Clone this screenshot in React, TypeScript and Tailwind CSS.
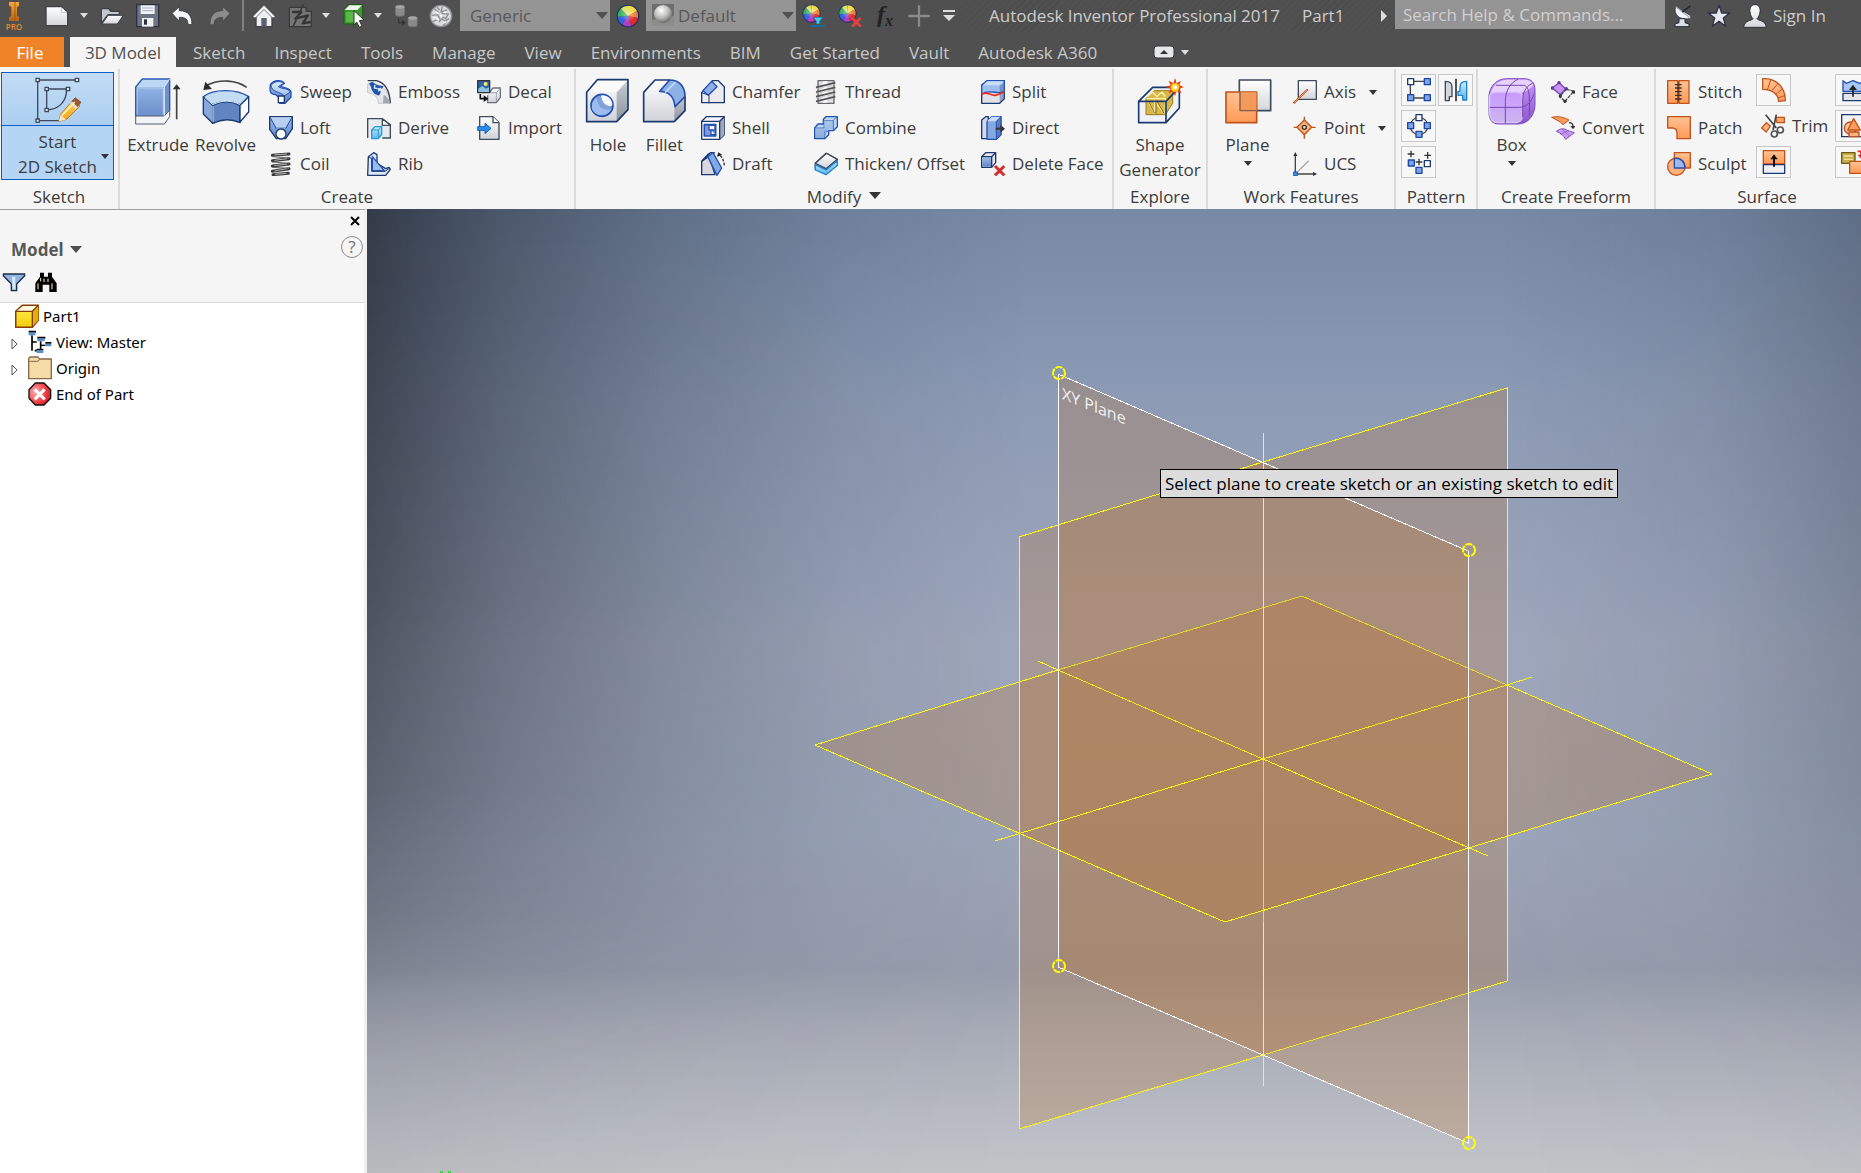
import React from "react";

type Kids = { children?: React.ReactNode };

/* ---------- drawing helpers ---------- */

const navy = "#1c3a72";
const blue = "#2450b4";
const rust = "#c0531c";
const steel = "#3f4a5c";

function Defs() {
  const grads: [string, string, string][] = [
    ["gBlue", "#9dbcea", "#5f86c4"],
    ["gPale", "#dcebfa", "#9fc0e8"],
    ["gGrey", "#ffffff", "#cfd2d8"],
    ["gSide", "#c9ccd4", "#8c919e"],
    ["gOrange", "#ffc294", "#ff9a58"],
    ["gWhite", "#ffffff", "#d4d6da"],
    ["gPurple", "#c79bff", "#cdb4ee"],
    ["gPurpleDk", "#c896f8", "#8a55cc"],
    ["gCyan", "#c4ecff", "#5db4ee"],
    ["gLogo", "#f7a63c", "#b5641a"],
    ["gPencil", "#ffe070", "#f09a10"],
    ["gYellow", "#fff04a", "#f2cc10"],
  ];
  return (
    <svg className="absolute size-0" aria-hidden="true">
      <defs>
        {grads.map(([id, a, b]) => (
          <linearGradient key={id} id={id} x1="0" y1="0" x2="0" y2="1">
            <stop offset="0" stopColor={a} />
            <stop offset="1" stopColor={b} />
          </linearGradient>
        ))}
        <radialGradient id="gBall" cx="0.4" cy="0.3" r="0.7">
          <stop offset="0" stopColor="#ffffff" />
          <stop offset="0.6" stopColor="#b8b8b6" />
          <stop offset="1" stopColor="#6c6c6a" />
        </radialGradient>
        <radialGradient id="gRed" cx="0.3" cy="0.4" r="0.8">
          <stop offset="0" stopColor="#ffb4b4" />
          <stop offset="0.6" stopColor="#f04048" />
          <stop offset="1" stopColor="#d80c18" />
        </radialGradient>
        <radialGradient id="gShine" cx="0.5" cy="0.5" r="0.5">
          <stop offset="0" stopColor="#ffffff" stopOpacity="0.45" />
          <stop offset="1" stopColor="#ffffff" stopOpacity="0" />
        </radialGradient>
      </defs>
    </svg>
  );
}

const Sm = ({ children }: Kids) => (
  <svg viewBox="0 0 72 72" className="size-6 shrink-0" fill="none" strokeWidth="4" strokeLinejoin="round" aria-hidden="true">
    {children}
  </svg>
);
const Lg = ({ children }: Kids) => (
  <svg viewBox="0 0 144 144" className="size-12 shrink-0" fill="none" strokeWidth="4" strokeLinejoin="round" aria-hidden="true">
    {children}
  </svg>
);
const Caret = ({ className = "text-[#333]" }: { className?: string }) => (
  <svg viewBox="0 0 8 5" className={"h-[5px] w-2 shrink-0 " + className} aria-hidden="true">
    <path d="M0 0h8L4 5z" fill="currentColor" />
  </svg>
);
const WideCaret = ({ className = "" }: { className?: string }) => (
  <svg viewBox="0 0 12 7" className={"h-[7px] w-3 shrink-0 " + className} aria-hidden="true">
    <path d="M0 0h12L6 7z" fill="currentColor" />
  </svg>
);

/* ---------- ribbon icons ---------- */

const SketchIcon = () => (
  <Lg>
    <g stroke={steel} strokeWidth="4">
      <path d="M11 12H128M11 12V134H76M38 39H98M38 39V102M98 39C98 76 76 100 38 102" />
      <g fill="#dcecfa" strokeWidth="4">
        <path d="M6 7h10v10H6zM124 7h10v10h-10zM33 34h10v10H33zM97 34h10v10H97zM33 97h10v10H33zM6 129h10v10H6z" />
      </g>
    </g>
    <path d="M74 136l6-22 38-42 20 18-40 40z" fill="url(#gPencil)" stroke="#a05a10" strokeWidth="2" />
    <path d="M112 78l12-13 17 14-12 14z" fill="#a0562c" stroke="#6d3a1c" strokeWidth="2" />
    <path d="M108 82l5-6 18 17-6 6z" fill="#d8dce4" />
    <path d="M74 136l6-20 16 15z" fill="#f8e4c4" />
    <path d="M84 118l38-40" stroke="#fff6b0" strokeWidth="5" />
  </Lg>
);
const ExtrudeIcon = () => (
  <Lg>
    <path d="M5 27L25 3h80l-14 24v108H5z" fill="url(#gBlue)" />
    <path d="M5 27L25 3h82L91 27z" fill="#bcd8f4" />
    <path d="M91 27l16-24v112l-16 20z" fill="#6d8fca" />
    <path d="M5 114h86l16-18v20l-16 22H5z" fill="#f2f3f5" stroke="#555f70" strokeWidth="3" />
    <path d="M9 110V30h79v80" stroke="#b8d0f0" strokeWidth="3" />
    <path d="M5 114V27L25 3h82v94" stroke="#2c58b4" strokeWidth="4" />
    <path d="M91 27v86M91 27l16-24" stroke="#dcebfa" strokeWidth="3" />
    <path d="M128 124V28" stroke="#444" strokeWidth="5" />
    <path d="M116 34l12-15 12 15z" fill="#333" />
  </Lg>
);
const RevolveIcon = () => (
  <Lg>
    <path d="M4 56C34 32 104 32 140 56L116 80C88 68 58 68 30 80z" fill="#c2dcf4" stroke={blue} />
    <path d="M4 56v52l28 28V82z" fill="#86a8dc" stroke={navy} />
    <path d="M32 82C60 68 86 68 114 82v52C88 122 60 122 32 136z" fill="#6284c0" stroke={navy} />
    <path d="M8 58l24 22C60 66 88 66 114 80l22-22M33 84v48" stroke="#dcebfa" strokeWidth="3" />
    <path d="M114 82l26-26v46l-26 30z" fill="#fbfbfd" stroke={navy} strokeWidth="4" />
    <path d="M134 28C104 6 54 2 14 22" stroke="#444" strokeWidth="5" />
    <path d="M4 36l6-25 20 22z" fill="#2c2c2c" />
  </Lg>
);
const SweepIcon = () => (
  <Sm>
    <path d="M4 14C14 -2 40 0 46 10L34 18C44 24 66 24 66 36v16L48 70H32V54L20 44C2 42 2 34 4 14z" fill="url(#gBlue)" stroke={blue} />
    <path d="M6 16C18 2 34 2 44 10L28 20C40 28 58 24 64 36L46 48C34 34 8 38 6 16z" fill="url(#gPale)" stroke={blue} strokeWidth="3" />
    <path d="M28 48h18v20H28z" fill="#fff" stroke={navy} />
  </Sm>
);
const LoftIcon = () => (
  <Sm>
    <path d="M2 2h68v36L50 68H22L2 40z" fill="url(#gBlue)" stroke={navy} />
    <path d="M4 4h64L50 34H22z" fill="#b8d0f0" />
    <path d="M2 2L22 38M70 2L50 38" stroke={blue} strokeWidth="3" />
    <circle cx="36" cy="54" r="15" fill="#fff" stroke={navy} />
  </Sm>
);
const CoilIcon = () => (
  <Sm>
    <g stroke="#3a3a3a" strokeWidth="9" strokeLinecap="round">
      <path d="M10 10L60 6M10 26L60 20M10 42L60 36M10 58L60 50M12 68L58 64" />
    </g>
    <g stroke="#b8b8b8" strokeWidth="3">
      <path d="M16 9L54 6M16 25L54 20M16 41L54 36M16 57L54 50M18 67L52 64" />
    </g>
    <path d="M10 14l50 4M10 30l50 4M10 46l50 3" stroke="#666" strokeWidth="3" />
  </Sm>
);
const EmbossIcon = () => (
  <Sm>
    <path d="M2 12C40 4 66 30 70 70H34C34 52 22 40 2 38z" fill="#e4e6ea" stroke="#b4b8c0" strokeWidth="2" />
    <path d="M2 2h26C54 8 68 30 70 70" stroke="#333c4a" />
    <path d="M50 44c10 6 18 14 20 26H48z" fill="#a4a8b0" />
    <path d="M6 10l10-5 14 10 20 4-6 8-10-4-2 6 10 6-6 12-14-6-8-12-2-8z" fill="#1f55b0" />
    <path d="M24 14l-2 10 10 2M42 24l-8 10" stroke="#d8e8ff" strokeWidth="4" />
  </Sm>
);
const DeriveIcon = () => (
  <Sm>
    <path d="M2 66V8h44l24 18v40H46" fill="#e8eaee" stroke={steel} />
    <path d="M46 8v20h24z" fill="#fff" stroke={steel} />
    <path d="M14 42l10-10h20v24L34 68H14z" fill="url(#gCyan)" stroke="#2a9ad8" />
    <path d="M14 42h20v26M34 42l10-10" stroke="#2a9ad8" strokeWidth="3" />
  </Sm>
);
const RibIcon = () => (
  <Sm>
    <path d="M4 14L20 2l10 6v26l26 16 10-4 4 6-14 18H2z" fill="#dce6f4" stroke={navy} />
    <path d="M16 14l36 42H16z" fill="#9cbcec" stroke={blue} />
    <path d="M4 14l10 6v38h40l14-10" stroke={navy} strokeWidth="3" />
  </Sm>
);
const DecalIcon = () => (
  <Sm>
    <path d="M38 36l10-12h22v28L58 68H32V46" fill="url(#gGrey)" stroke="#6a7080" />
    <path d="M58 38h-18M58 38v28M58 38l12-13" stroke="#9aa0ac" strokeWidth="3" />
    <path d="M2 2h36v36H2z" fill="#2f62a8" stroke="#333" />
    <path d="M4 26l12-8 10 8 10-4v14H4z" fill="#8fc4e0" />
    <circle cx="26" cy="12" r="6" fill="#ffe85a" />
    <path d="M10 42v14h12" stroke="#111" strokeWidth="5" />
    <path d="M20 46l14 10-14 10z" fill="#111" />
  </Sm>
);
const ImportIcon = () => (
  <Sm>
    <path d="M8 2h40l18 18v50H8z" fill="url(#gGrey)" stroke={steel} />
    <path d="M48 2v18h18" fill="#fff" stroke={steel} />
    <path d="M2 32h22V22l18 15-18 16V43H2z" fill="#2d8ce8" stroke="#1464b8" strokeWidth="3" />
  </Sm>
);
const HoleIcon = () => (
  <Lg>
    <path d="M8 43L40 5h92v92l-34 34H8z" fill="url(#gGrey)" />
    <path d="M98 43l34-38v92l-34 34z" fill="url(#gSide)" />
    <path d="M8 43L40 5h92L98 43z" fill="#fbfbfc" />
    <path d="M8 43L40 5h92v90l-34 36H8z" stroke={navy} strokeWidth="5" />
    <circle cx="54" cy="82" r="33" fill="#7fa0d8" stroke={blue} strokeWidth="5" />
    <path d="M52 52c14-3 34 10 33 30-12 8-34-6-33-30z" fill="#f6f8fc" />
    <path d="M24 92c10 26 46 24 58 2-20 4-40-2-44-34-10 8-16 20-14 32z" fill="#9dbcf0" />
  </Lg>
);
const FilletIcon = () => (
  <Lg>
    <path d="M8 43L42 6h40l50 40v54l-34 31H8z" fill="url(#gGrey)" />
    <path d="M100 88l32-34v44l-32 33z" fill="url(#gSide)" />
    <path d="M56 40L86 6c26 0 46 16 46 50L102 86C100 58 84 40 56 40z" fill="#8eb0e4" stroke={blue} strokeWidth="5" />
    <path d="M72 44L104 12" stroke="#c4daf8" strokeWidth="5" />
    <path d="M8 43L42 6h44M8 43v88h92M132 56v42l-32 33" stroke={navy} strokeWidth="5" />
  </Lg>
);
const ChamferIcon = () => (
  <Sm>
    <path d="M2 38L34 2h18l18 18v48H2z" fill="#ececee" stroke={navy} />
    <path d="M2 38l22 8v24" stroke={navy} strokeWidth="3" />
    <path d="M6 32L32 4l16 16-26 26z" fill="#8fb0e4" stroke={blue} />
  </Sm>
);
const ShellIcon = () => (
  <Sm>
    <path d="M2 16L16 2h54v54L56 70H2z" fill="#f6f6f8" stroke={navy} />
    <path d="M56 16L70 2v54L56 70z" fill="#a4a8b4" />
    <path d="M2 16h54v54M56 16L70 2" stroke={navy} />
    <path d="M10 26h34v34H10z" fill="#7c9edc" stroke={blue} strokeWidth="5" />
    <path d="M24 28h18v14H24zM30 42v14h12" fill="#fff" stroke={blue} />
  </Sm>
);
const DraftIcon = () => (
  <Sm>
    <path d="M2 28L22 6l20 62H2z" fill="#d8dade" stroke={navy} />
    <path d="M2 28L28 2h12L22 14z" fill="#fff" stroke={navy} />
    <path d="M20 14L36 2l26 46-14 22z" fill="#84a8e4" stroke={blue} />
    <path d="M70 40C68 24 64 16 56 10" stroke="#333" strokeDasharray="8 4" />
    <path d="M48 14l4-13 12 8z" fill="#222" />
  </Sm>
);
const ThreadIcon = () => (
  <Sm>
    <path d="M12 2h48v68H12z" fill="#e0e0e2" stroke="#6a6a6e" />
    <path d="M26 4h14v64H26z" fill="#fff" />
    <path d="M6 22L64 8M6 36L64 22M6 50L64 36M6 64L64 50" stroke="#555" strokeWidth="5" />
    <path d="M6 27L64 13M6 41L64 27M6 55L64 41" stroke="#bbb" strokeWidth="2" />
  </Sm>
);
const CombineIcon = () => (
  <Sm>
    <path d="M2 36l10-12h16V10l8-8h34v30L58 44H44v12L32 68H2z" fill="#c0d8f4" stroke={blue} />
    <path d="M2 36h28V14h28v28M30 36v-2M58 12L70 2M58 12v30M32 66V46h14" stroke="#4a78c4" strokeWidth="3" />
    <path d="M4 38h26v-24h26v26H44L30 66H4z" fill="url(#gBlue)" opacity="0.55" />
  </Sm>
);
const ThickenIcon = () => (
  <Sm>
    <path d="M4 34L36 4l34 18v16L36 66 4 52z" fill="#8c929c" stroke={steel} />
    <path d="M4 34L38 4l32 18-34 28z" fill="url(#gGrey)" stroke={steel} />
    <path d="M4 38l32 16 34-28v14L36 68 4 54z" fill="url(#gCyan)" stroke="#1f84cc" />
  </Sm>
);
const SplitIcon = () => (
  <Sm>
    <path d="M2 16L18 2h52v54L56 70H2z" fill="#dfe1e6" stroke={navy} />
    <path d="M2 16L18 2h52v32C52 46 28 26 2 42z" fill="#9cbef0" stroke={blue} />
    <path d="M18 4h50L54 16H6z" fill="#c8ddf8" />
    <path d="M56 18v50l14-14V8z" fill="#4a64a0" opacity="0.5" />
    <path d="M2 44c14-14 26 4 40 2s14-6 28-10" stroke="#f02828" strokeWidth="5" />
  </Sm>
);
const DirectIcon = () => (
  <Sm>
    <path d="M2 12L14 2h8v66H2z" fill="#d4dae6" stroke={navy} />
    <path d="M18 16L32 2h28v54L46 70H18z" fill="#84a8e0" stroke={blue} />
    <path d="M18 16L32 2h28L46 16z" fill="#c8dcf6" />
    <path d="M46 16L60 2v54L46 70z" fill="#5a7cbc" stroke={blue} strokeWidth="3" />
    <path d="M44 38h14" stroke="#333" strokeWidth="6" />
    <path d="M58 26l14 12-14 12z" fill="#333" />
  </Sm>
);
const DeleteFaceIcon = () => (
  <Sm>
    <path d="M2 14L14 2h30v30L32 46H2z" fill="#e6e8ee" stroke={navy} />
    <path d="M4 16h26v28H4z" fill="url(#gBlue)" />
    <path d="M2 14h30v32M32 14L44 2" stroke={navy} />
    <path d="M42 42l28 28M70 42L42 70" stroke="#d03030" strokeWidth="9" />
  </Sm>
);
const ShapeGenIcon = () => (
  <Lg>
    <path d="M8 70L50 28h80v62l-40 44H8z" fill="#f0f2f5" />
    <path d="M30 62l24-24h56v38L88 110H30z" fill="#d8b848" stroke="#9a7a18" strokeWidth="3" />
    <path d="M32 62h56v48M36 68l20 38V68l28 38M34 56l16-14 12 14 16-14 10 14" stroke="#fdf0b0" strokeWidth="4" />
    <path d="M38 70l18 36M62 68l22 38M60 68v40" stroke="#8a6a10" strokeWidth="3" />
    <path d="M8 70L50 28h80v62l-40 44H8zM8 70h82v64M90 70l40-42" stroke={navy} strokeWidth="5" />
    <path d="M117 0l5 16 12-7-4 13 15 5-15 5 6 14-14-7-5 15-6-15-13 8 6-15-15-5 15-5-6-14 14 8z" fill="#e8380c" />
    <circle cx="117" cy="28" r="13" fill="#ffd21c" />
    <circle cx="117" cy="28" r="6" fill="#fff" />
  </Lg>
);
const PlaneIcon = () => (
  <Lg>
    <path d="M46 6h94v92H46z" fill="url(#gWhite)" stroke={steel} strokeWidth="5" />
    <path d="M6 42h92v92H6z" fill="url(#gOrange)" stroke={rust} strokeWidth="5" />
    <path d="M48 42h50v56H48z" fill="#f09455" opacity="0.8" />
    <path d="M48 42v56h50" stroke="#8a5a44" strokeWidth="4" />
  </Lg>
);
const AxisIcon = () => (
  <Sm>
    <path d="M16 2h54v56H16z" fill="url(#gWhite)" stroke={steel} />
    <path d="M2 70L44 28" stroke={rust} strokeWidth="6" />
    <path d="M4 68L42 30" stroke="#ffb080" strokeWidth="2" />
  </Sm>
);
const PointIcon = () => (
  <Sm>
    <path d="M34 2v66M2 34h66" stroke={rust} />
    <path d="M34 12l22 22-22 22-22-22z" fill="#ffb27c" stroke={rust} />
    <circle cx="34" cy="34" r="6" fill="#ffd8b8" stroke="#333" strokeWidth="4" />
  </Sm>
);
const UcsIcon = () => (
  <Sm>
    <path d="M7 66V6M7 66h60" stroke="#444" />
    <path d="M7 66l40-40" stroke="#aaa" />
    <path d="M1 12L7 0l6 12zM60 60l12 6-12 6z" fill="#333" />
    <path d="M2 60h11v11H2z" fill="#3a8cf0" stroke="#1858b0" strokeWidth="3" />
  </Sm>
);
const RectPatternIcon = () => (
  <Sm>
    <path d="M10 10h50M10 10v50h50" stroke="#444" />
    <path d="M2 2h18v18H2z" fill="#fff" stroke={navy} />
    <path d="M52 2h18v18H52zM2 50h18v18H2zM52 50h18v18H52z" fill="#7fa4e4" stroke="#1c48a8" />
  </Sm>
);
const MirrorIcon = () => (
  <Sm>
    <path d="M4 10c12 0 20 6 20 16v30h-8v12H4z" fill="#d4d6da" stroke={steel} />
    <path d="M68 10c-12 0-20 6-20 16v14h-6v12h14v14h12z" fill="url(#gCyan)" stroke="#1f84cc" />
    <path d="M36 2v68" stroke="#333" strokeWidth="5" />
  </Sm>
);
const CircPatternIcon = () => (
  <Sm>
    <circle cx="36" cy="36" r="26" stroke="#444" />
    <path d="M27 2h18v18H27z" fill="#fff" stroke={navy} />
    <path d="M2 26h18v18H2zM52 26h18v18H52zM27 52h18v18H27z" fill="#7fa4e4" stroke="#1c48a8" />
  </Sm>
);
const SketchPatternIcon = () => (
  <Sm>
    <path d="M12 2v20M2 12h20M36 26v20M26 36h20M62 6v20M52 16h20" stroke="#333" />
    <path d="M4 30h18v18H4zM27 52h18v18H27z" fill="#7fa4e4" stroke="#1c48a8" />
    <path d="M52 32h18v18H52z" fill="#fff" stroke={navy} />
  </Sm>
);
const BoxIcon = () => (
  <Lg>
    <path d="M3 52C5 24 28 2 56 2h52c22 0 33 12 33 34v44c0 32-22 58-50 58H32C14 138 3 126 3 104z" fill="url(#gPurpleDk)" stroke="#7a4fc0" strokeWidth="3" />
    <path d="M8 46C14 20 36 5 58 5h50c14 0 24 6 28 16-12 14-22 20-38 24z" fill="#e6d2fa" />
    <path d="M5 58c0-10 8-16 20-16h60c12 0 18 6 18 16v56c0 12-8 20-20 20H30c-14 0-25-10-25-28z" fill="url(#gPurple)" stroke="#dcc6fa" strokeWidth="4" />
    <path d="M52 136V70C52 40 66 14 90 4M5 88h90c26 0 38-24 44-42M104 118V62C106 34 120 22 134 16M24 22h84c14 4 18 20 16 90" stroke="#7546b4" strokeWidth="3" />
  </Lg>
);
const FaceIcon = () => (
  <Sm>
    <path d="M4 24L24 8l20 18-16 18z" fill="#c894f4" stroke="#7a44b8" />
    <path d="M46 28l22 6-26 30-16-14z" fill="#f2f2f4" stroke="#444" strokeDasharray="10 3" />
    <g fill="#5c3494">
      <circle cx="24" cy="8" r="5" />
      <circle cx="4" cy="24" r="5" />
      <circle cx="46" cy="26" r="5" />
    </g>
    <g fill="#333">
      <circle cx="68" cy="36" r="5" />
      <circle cx="42" cy="64" r="5" />
      <circle cx="28" cy="48" r="5" />
    </g>
  </Sm>
);
const ConvertIcon = () => (
  <Sm>
    <path d="M2 4c16-4 34-2 52 8L36 26C28 16 16 12 2 4z" fill="#f79a5c" stroke={rust} strokeWidth="3" />
    <path d="M16 46c14-10 24-10 34-2l20 6-26 20C38 58 30 52 16 46z" fill="#c79cf0" stroke="#8450c0" strokeWidth="3" />
    <path d="M34 40l22 20M28 56l26-14" stroke="#8450c0" strokeWidth="2" />
    <path d="M54 20c8 0 12 4 12 12" stroke="#333" />
    <path d="M58 30h16l-8 10z" fill="#333" />
  </Sm>
);
const StitchIcon = () => (
  <Sm>
    <path d="M2 2h30v68H2zM36 2h30v68H36z" fill="url(#gOrange)" stroke={rust} />
    <path d="M34 8v56" stroke="#8a3a10" strokeWidth="3" />
    <path d="M24 14h20M24 24h20M24 35h20M24 46h20M24 57h20" stroke="#333" />
  </Sm>
);
const PatchIcon = () => (
  <Sm>
    <path d="M2 2h68v66H30V52C30 40 26 36 16 36H2z" fill="url(#gOrange)" stroke={rust} />
  </Sm>
);
const SculptIcon = () => (
  <Sm>
    <path d="M22 2h48v46H22z" fill="url(#gOrange)" stroke={rust} />
    <circle cx="28" cy="44" r="26" fill="#ffb27c" stroke={rust} />
    <path d="M22 20c18-4 32 10 32 28H22z" fill="#9cb8e8" stroke={blue} />
  </Sm>
);
const RuledIcon = () => (
  <Sm>
    <path d="M2 2c42-2 68 26 68 66l-20 2C48 48 30 34 2 34z" fill="url(#gOrange)" stroke={rust} />
    <path d="M16 36L26 6M28 40L48 16M40 50l22-18M48 60l22-8" stroke={rust} strokeWidth="3" />
  </Sm>
);
const TrimIcon = () => (
  <Sm>
    <path d="M2 42l14-16 12 10-12 18z" fill="#ffb27c" stroke={rust} />
    <path d="M44 10h26v16H48z" fill="#ffa868" stroke={rust} />
    <path d="M14 2l32 40M46 2L36 48" stroke="#444" strokeWidth="5" />
    <circle cx="58" cy="48" r="9" stroke="#555" strokeWidth="5" />
    <circle cx="40" cy="60" r="9" stroke="#555" strokeWidth="5" />
  </Sm>
);
const ExtendIcon = () => (
  <Sm>
    <path d="M4 2h64v40H4z" fill="url(#gOrange)" stroke={rust} />
    <path d="M4 44h64v26H4z" fill="#eef0f3" stroke={navy} />
    <path d="M36 50V20" stroke="#111" strokeWidth="6" />
    <path d="M25 28l11-15 11 15z" fill="#111" />
  </Sm>
);
const ReplaceIcon = () => (
  <Sm>
    <path d="M6 8l10 8 20-8 20 8 16-8v32H6z" fill="#a8c6f2" stroke={blue} />
    <path d="M6 46h66v22H6z" fill="#e4e6ea" stroke={navy} />
    <path d="M36 56V28" stroke="#222" strokeWidth="5" />
    <path d="M24 36l12-16 12 16z" fill="#222" />
  </Sm>
);
const RepairIcon = () => (
  <Sm>
    <path d="M2 2h68v66H2z" fill="#f2f2f4" stroke={navy} />
    <circle cx="28" cy="42" r="18" fill="#ffc49a" stroke={rust} />
    <path d="M38 14l20 34H20z" fill="#ff9c5c" stroke={rust} />
    <path d="M24 54h30v14H24z" fill="#ffb27c" stroke={rust} />
  </Sm>
);
const FitMeshIcon = () => (
  <Sm>
    <path d="M2 8h40v32H2z" fill="#c8b050" stroke="#6a5a14" />
    <path d="M8 18h28M8 28h28" stroke="#f0e090" />
    <path d="M26 34h46v36H26z" fill="url(#gOrange)" stroke={rust} />
    <path d="M50 4h10v14" stroke="#f02020" strokeWidth="5" />
    <path d="M50 14h20l-10 12z" fill="#f02020" />
  </Sm>
);

/* ---------- ribbon building blocks ---------- */

function Panel({ title, width, caret, children }: { title: string; width: string; caret?: boolean } & Kids) {
  return (
    <section className={"flex h-[142px] shrink-0 flex-col pt-[7px] " + width}>
      <div className="flex h-[108px] items-start">{children}</div>
      <h2 className="flex h-[27px] items-end justify-center gap-2 leading-6">
        <span>{title}</span>
        {caret && <WideCaret className="mb-2.5 text-[#333]" />}
      </h2>
    </section>
  );
}
const Rule = () => <div className="mt-0.5 w-0.5 shrink-0 bg-[#dadada]" />;

function Big({ icon, lines, width, caret }: { icon: React.ReactNode; lines: string[]; width: string; caret?: boolean }) {
  return (
    <button type="button" className={"flex shrink-0 flex-col items-center pt-1 " + width}>
      {icon}
      <span className="mt-1.5 flex flex-col items-center leading-[25px] whitespace-nowrap">
        {lines.map((l) => (
          <span key={l}>{l}</span>
        ))}
      </span>
      {caret && <Caret className="mt-1 text-[#333]" />}
    </button>
  );
}
type Item = [React.ReactNode, string, boolean?];
function Column({ items, width }: { items: Item[]; width: string }) {
  return (
    <div className={"flex shrink-0 flex-col " + width}>
      {items.map(([icon, label, caret]) => (
        <button key={label} type="button" className="flex h-9 items-center gap-[7px] whitespace-nowrap">
          {icon}
          <span>{label}</span>
          {caret && <Caret className="ml-1.5 text-[#333]" />}
        </button>
      ))}
    </div>
  );
}
function Boxed({ label, children }: { label: string } & Kids) {
  return (
    <button type="button" aria-label={label} className="flex h-8 w-[35px] shrink-0 items-center justify-center border border-[#c8c8c8] bg-[#f7f7f7]">
      {children}
    </button>
  );
}

function Ribbon() {
  return (
    <div className="flex shrink-0 overflow-hidden bg-[#f5f5f5] text-[#3c3c3c]">
      <Panel title="Sketch" width="w-[118px]">
        <button type="button" className="mt-[-2px] ml-px flex h-[108px] w-[113px] flex-col items-center border border-[#0b5fc4] bg-[#b4d5f3]">
          <span className="flex h-[55px] w-full items-center justify-center border-b border-[#0b5fc4] bg-gradient-to-b from-[#c3dcf5] to-[#abcff0] pt-0.5">
            <SketchIcon />
          </span>
          <span className="relative mt-[3px] block w-full leading-[25px]">
            Start
            <br />
            2D Sketch
            <span className="absolute right-1 bottom-5">
              <Caret />
            </span>
          </span>
        </button>
      </Panel>
      <Rule />
      <Panel title="Create" width="w-[454px]">
        <Big icon={<ExtrudeIcon />} lines={["Extrude"]} width="ml-1.5 w-16" />
        <Big icon={<RevolveIcon />} lines={["Revolve"]} width="ml-1 mr-3 w-[63px]" />
        <Column width="w-[98px]" items={[[<SweepIcon />, "Sweep"], [<LoftIcon />, "Loft"], [<CoilIcon />, "Coil"]]} />
        <Column width="w-[110px]" items={[[<EmbossIcon />, "Emboss"], [<DeriveIcon />, "Derive"], [<RibIcon />, "Rib"]]} />
        <Column width="w-[90px]" items={[[<DecalIcon />, "Decal"], [<ImportIcon />, "Import"]]} />
      </Panel>
      <Rule />
      <Panel title="Modify" width="w-[536px]" caret>
        <Big icon={<HoleIcon />} lines={["Hole"]} width="ml-1 w-14" />
        <Big icon={<FilletIcon />} lines={["Fillet"]} width="mr-2 w-[57px]" />
        <Column width="w-[113px]" items={[[<ChamferIcon />, "Chamfer"], [<ShellIcon />, "Shell"], [<DraftIcon />, "Draft"]]} />
        <Column width="w-[167px]" items={[[<ThreadIcon />, "Thread"], [<CombineIcon />, "Combine"], [<ThickenIcon />, "Thicken/ Offset"]]} />
        <Column width="w-[124px]" items={[[<SplitIcon />, "Split"], [<DirectIcon />, "Direct"], [<DeleteFaceIcon />, "Delete Face"]]} />
      </Panel>
      <Rule />
      <Panel title="Explore" width="w-[92px]">
        <Big icon={<ShapeGenIcon />} lines={["Shape", "Generator"]} width="w-full" />
      </Panel>
      <Rule />
      <Panel title="Work Features" width="w-[186px]">
        <Big icon={<PlaneIcon />} lines={["Plane"]} width="ml-[9px] mr-[15px] w-[61px]" caret />
        <Column width="w-[98px]" items={[[<AxisIcon />, "Axis", true], [<PointIcon />, "Point", true], [<UcsIcon />, "UCS"]]} />
      </Panel>
      <Rule />
      <Panel title="Pattern" width="w-20">
        <div className="ml-[5px] grid grid-cols-2 gap-x-0.5 gap-y-1">
          <Boxed label="Rectangular Pattern"><RectPatternIcon /></Boxed>
          <Boxed label="Mirror"><MirrorIcon /></Boxed>
          <Boxed label="Circular Pattern"><CircPatternIcon /></Boxed>
          <span />
          <Boxed label="Sketch Driven Pattern"><SketchPatternIcon /></Boxed>
        </div>
      </Panel>
      <Rule />
      <Panel title="Create Freeform" width="w-44">
        <Big icon={<BoxIcon />} lines={["Box"]} width="ml-[7px] mr-[13px] w-[53px]" caret />
        <Column width="w-[100px]" items={[[<FaceIcon />, "Face"], [<ConvertIcon />, "Convert"]]} />
      </Panel>
      <Rule />
      <Panel title="Surface" width="w-[222px]">
        <Column width="ml-[11px] w-[89px]" items={[[<StitchIcon />, "Stitch"], [<PatchIcon />, "Patch"], [<SculptIcon />, "Sculpt"]]} />
        <div className="flex w-[79px] shrink-0 flex-col gap-1">
          <Boxed label="Ruled Surface"><RuledIcon /></Boxed>
          <button type="button" className="flex h-8 items-center gap-[7px] pl-[5px]">
            <TrimIcon />
            <span>Trim</span>
          </button>
          <Boxed label="Extend"><ExtendIcon /></Boxed>
        </div>
        <div className="flex shrink-0 flex-col gap-1">
          <Boxed label="Replace Face"><ReplaceIcon /></Boxed>
          <Boxed label="Repair Bodies"><RepairIcon /></Boxed>
          <Boxed label="Fit Mesh Face"><FitMeshIcon /></Boxed>
        </div>
      </Panel>
    </div>
  );
}

/* ---------- quick access bar ---------- */

const Wheel = () => (
  <g>
    <circle cx="36" cy="36" r="34" fill="#1b2c66" />
    <path d="M36 36L36 5A31 31 0 0 1 63 21z" fill="#f4d83c" />
    <path d="M36 36L63 21A31 31 0 0 1 66 42z" fill="#f08030" />
    <path d="M36 36L66 42A31 31 0 0 1 46 65z" fill="#e02c2c" />
    <path d="M36 36L46 65A31 31 0 0 1 18 61z" fill="#b040c8" />
    <path d="M36 36L18 61A31 31 0 0 1 5 38z" fill="#3464e0" />
    <path d="M36 36L5 38A31 31 0 0 1 14 14z" fill="#38b060" />
    <path d="M36 36L14 14A31 31 0 0 1 36 5z" fill="#d4e05c" />
    <circle cx="36" cy="30" r="24" fill="url(#gShine)" />
  </g>
);

function IconButton({ label, width, children }: { label: string; width: string } & Kids) {
  return (
    <button type="button" aria-label={label} className={"flex h-[31px] shrink-0 items-center justify-center " + width}>
      {children}
    </button>
  );
}

function TitleBar() {
  return (
    <div className="flex h-[31px] shrink-0 items-start whitespace-nowrap">
      <IconButton label="Application menu" width="w-7">
        <svg viewBox="0 0 28 31" className="h-[31px] w-7" aria-hidden="true">
          <path d="M9 2h10v4l-2 1v9l2 1v4H9v-4l2-1V7L9 6z" fill="url(#gLogo)" />
          <path d="M9 6l2 1v9l-2 1M15 2v19" stroke="#8a4a10" strokeOpacity="0.7" fill="none" />
          <text x="14" y="30" textAnchor="middle" fontSize="8" fontWeight="600" fill="#e08a2c" fontFamily="Open Sans, sans-serif">PRO</text>
        </svg>
      </IconButton>
      <IconButton label="New" width="ml-3.5 w-[30px]">
        <Sm><path d="M3 8h46l19 17v40H3z" fill="url(#gWhite)" stroke="#3c4048" /><path d="M49 10v15h17" fill="#fff" stroke="#9aa" strokeWidth="2" /></Sm>
      </IconButton>
      <IconButton label="New file options" width="w-6"><Caret className="text-[#ddd]" /></IconButton>
      <IconButton label="Open" width="w-8">
        <Sm><path d="M4 58V14h22l6 8h26v10H24z" fill="#c4c8ce" stroke="#3c4048" /><path d="M6 60l18-26h46L52 60z" fill="url(#gWhite)" stroke="#3c4048" strokeWidth="3" /></Sm>
      </IconButton>
      <IconButton label="Save" width="ml-1 w-8">
        <Sm><path d="M2 2h66v66H2z" fill="#6c7484" stroke="#2c3240" /><path d="M14 4h42v26H14z" fill="#f4f5f8" /><path d="M18 12h34M18 20h34" stroke="#aab" strokeWidth="3" /><path d="M18 42h34v26H18z" fill="#f0f0f2" /><path d="M24 46h9v16h-9z" fill="#2c3240" /></Sm>
      </IconButton>
      <IconButton label="Undo" width="ml-0.5 w-8">
        <Sm><path d="M6 28L28 8v12c26 0 38 14 38 42h-12c0-16-8-22-26-22v12z" fill="#f4f6f8" stroke="#3c4048" strokeWidth="3" /></Sm>
      </IconButton>
      <IconButton label="Redo" width="ml-1.5 w-8">
        <Sm><path d="M66 28L44 8v12C18 20 6 34 6 62h12c0-16 8-22 26-22v12z" fill="#8c8c8c" stroke="#444" strokeWidth="2" /></Sm>
      </IconButton>
      <div className="ml-1.5 h-[31px] w-0.5 shrink-0 bg-[#808080]" />
      <IconButton label="Home" width="ml-1 w-8">
        <Sm><path d="M12 36v32h48V36L36 12z" fill="#eceef2" stroke="#3c4048" /><path d="M2 38L36 4l34 34-8 4-26-26L10 42z" fill="#fff" stroke="#3c4048" strokeWidth="2" /><path d="M28 42h16v26H28z" fill="#5a6070" /></Sm>
      </IconButton>
      <IconButton label="Return" width="ml-1 w-8">
        <Sm><path d="M4 10h50v12h16v46H4z" fill="#757575" stroke="#3a3a3a" /><path d="M12 24h28L22 44l38-10-16 24 24-4" stroke="#343434" strokeWidth="7" /><path d="M14 70L46 2" stroke="#3a3a3a" strokeWidth="5" /></Sm>
      </IconButton>
      <IconButton label="Return options" width="w-5"><Caret className="text-[#ddd]" /></IconButton>
      <IconButton label="Select" width="ml-0.5 w-8">
        <Sm><path d="M6 16L20 2h42v40L48 60H6z" fill="#3c9a2c" stroke="#1c5a14" strokeWidth="3" /><path d="M8 18L22 4h38L46 18z" fill="#ecf6ea" /><path d="M12 24h32v30H12z" fill="#58b848" /><path d="M36 20l30 28-14 2 8 16-8 4-8-16-8 10z" fill="#fff" stroke="#333" strokeWidth="3" /></Sm>
      </IconButton>
      <IconButton label="Select options" width="w-4"><Caret className="text-[#ddd]" /></IconButton>
      <IconButton label="Update" width="ml-1 w-8">
        <Sm><g fill="#8a8a8a" stroke="#6c6c6c" strokeWidth="2"><path d="M4 8c0-6 28-6 28 0v24c0 6-28 6-28 0zM42 42c0-6 28-6 28 0v22c0 6-28 6-28 0z" /></g><g fill="#a6a6a6"><ellipse cx="18" cy="9" rx="13" ry="5" /><ellipse cx="56" cy="42" rx="13" ry="5" /></g><path d="M14 44v12h12" stroke="#333" /><path d="M24 48l12 8-12 8z" fill="#333" /></Sm>
      </IconButton>
      <IconButton label="Material browser" width="ml-[3px] w-8">
        <Sm><circle cx="36" cy="36" r="32" fill="#d8dadd" stroke="#8c9096" /><path d="M16 14l14 12M40 8l-4 16 18-6M8 34l18-2 6 12-20 8M38 28l20 2-8 14-14-8M30 54l8-10 14 10-10 12M60 44l-10 6M24 10l8 8" stroke="#8a8e94" strokeWidth="4" /><path d="M20 24l8 4M44 24l8 2M22 44l8 2M44 56l8-2M34 34l6 4M14 40l6 2" stroke="#fff" strokeWidth="5" /></Sm>
      </IconButton>
      <label className="relative ml-[3px] w-[150px] shrink-0">
        <select aria-label="Material" className="h-[31px] w-full appearance-none bg-[#949494] pr-6 pl-2.5 text-[#585858]">
          <option>Generic</option>
        </select>
        <WideCaret className="pointer-events-none absolute top-3 right-0.5 text-[#505050]" />
      </label>
      <IconButton label="Appearance browser" width="w-9"><Sm><Wheel /></Sm></IconButton>
      <label className="relative w-[150px] shrink-0">
        <select aria-label="Appearance" className="h-[31px] w-full appearance-none bg-[#949494] pr-6 pl-8 text-[#585858]">
          <option>Default</option>
        </select>
        <svg viewBox="0 0 22 22" className="pointer-events-none absolute top-1 left-1.5 size-[22px]" aria-hidden="true">
          <path d="M0 0h22v22H0z" fill="#6e6e6c" />
          <path d="M0 16l22-4v10H0z" fill="#8c8c88" />
          <circle cx="11" cy="10" r="9" fill="url(#gBall)" />
        </svg>
        <WideCaret className="pointer-events-none absolute top-3 right-0.5 text-[#505050]" />
      </label>
      <IconButton label="Adjust appearance" width="w-9">
        <Sm><g transform="scale(0.8)"><Wheel /></g><path d="M34 40h28l-9 12v8h-10v-8z" fill="#40c8f8" stroke="#1470a0" strokeWidth="2" /><path d="M26 66h44" stroke="#1c6ca0" strokeWidth="5" /></Sm>
      </IconButton>
      <IconButton label="Clear appearance" width="w-9">
        <Sm><g transform="scale(0.8)"><Wheel /></g><path d="M42 42l26 26M68 42L42 68" stroke="#e8403c" strokeWidth="8" /></Sm>
      </IconButton>
      <IconButton label="Parameters" width="w-[34px]">
        <span className="font-['Liberation_Serif',serif] text-2xl leading-6 font-bold text-[#222] italic">f<sub className="text-base">x</sub></span>
      </IconButton>
      <IconButton label="Add" width="w-[34px]">
        <Sm><path d="M36 4v64M4 36h64" stroke="#8a8a8a" strokeWidth="7" /></Sm>
      </IconButton>
      <IconButton label="Customize" width="ml-px w-6">
        <svg viewBox="0 0 12 11" className="h-[11px] w-3" aria-hidden="true"><path d="M0 0h12v2H0zM0 5h12l-6 6z" fill="#ddd" /></svg>
      </IconButton>
      <div className="flex h-[31px] min-w-0 flex-1 items-center bg-[repeating-linear-gradient(135deg,#4b4b4b_0px,#4b4b4b_1px,#505050_1px,#505050_5px)] pl-7 text-[#ccc]">
        <h1>Autodesk Inventor Professional 2017</h1>
        <span className="ml-[22px]">Part1</span>
        <svg viewBox="0 0 6 12" className="mr-2 ml-auto h-3 w-1.5" aria-hidden="true"><path d="M0 0l6 6-6 6z" fill="#ddd" /></svg>
      </div>
      <input type="search" aria-label="Search Help & Commands" placeholder="Search Help & Commands..." className="h-[29px] w-[270px] shrink-0 bg-[#949494] px-2 placeholder:text-[#d0d0d0]" />
      <IconButton label="Communication center" width="w-9">
        <Sm><path d="M14 8C8 30 22 48 54 44L60 36z" fill="#f4f5f8" stroke="#2c3240" strokeWidth="2" /><path d="M14 8l44 34" stroke="#aab0bc" strokeWidth="4" /><path d="M34 24L58 6" stroke="#222a34" strokeWidth="5" /><path d="M24 44h18v12l12 4v8H12v-8l12-4z" fill="#dcdfe4" stroke="#222a34" strokeWidth="3" /></Sm>
      </IconButton>
      <IconButton label="Favorites" width="w-[35px]">
        <Sm><path d="M36 4l8 23h24L49 42l7 25-20-15-20 15 7-25L4 27h24z" fill="#e4e6f0" stroke="#2c3240" strokeWidth="4" /></Sm>
      </IconButton>
      <button type="button" className="flex h-[31px] w-[125px] shrink-0 items-center gap-1.5 pl-[7px] text-[#ccc]">
        <Sm><path d="M36 2c12 0 17 10 15 22-1 10-5 16-9 20 2 6 26 4 28 26H2c2-22 26-20 28-26-4-4-8-10-9-20C19 12 24 2 36 2z" fill="url(#gWhite)" stroke="#2c3240" strokeWidth="3" /></Sm>
        Sign In
      </button>
    </div>
  );
}

const tabs = ["Sketch", "Inspect", "Tools", "Manage", "View", "Environments", "BIM", "Get Started", "Vault", "Autodesk A360"];

function TabBar() {
  return (
    <nav className="mt-1.5 flex h-[30px] shrink-0 items-stretch whitespace-nowrap text-[#c8c8c8]">
      <button type="button" className="mr-1.5 w-16 bg-[#f08228] pt-0.5 pr-1 text-white">File</button>
      <button type="button" aria-current="page" className="w-[106px] bg-[#f5f5f5] pt-0.5 text-[#505050]">3D Model</button>
      <div className="flex">
        {tabs.map((t) => (
          <button key={t} type="button" className="pt-0.5 pr-[15px] pl-3.5 first:pl-[17px]">{t}</button>
        ))}
      </div>
      <button type="button" aria-label="Minimize ribbon" className="ml-10 flex items-center gap-1.5 pl-px">
        <svg viewBox="0 0 22 14" className="h-3.5 w-[22px]" aria-hidden="true">
          <rect x="1" y="1" width="20" height="12" rx="3" fill="#e4e6ea" stroke="#30343c" />
          <path d="M7 9h8l-4-4z" fill="#333" />
        </svg>
        <Caret className="text-[#ddd]" />
      </button>
    </nav>
  );
}

/* ---------- model browser ---------- */

const Expander = () => (
  <svg viewBox="0 0 8 12" className="mt-1 h-3 w-2 shrink-0" aria-hidden="true">
    <path d="M1 1l5 5-5 5z" fill="#fff" stroke="#555" />
  </svg>
);

function Browser() {
  return (
    <aside className="flex w-[367px] shrink-0 flex-col border-t border-r-[3px] border-t-[#a0a0a0] border-r-[#f0f0f0] bg-white font-['Noto_Sans',sans-serif] text-[15px] text-black">
      <div className="h-[93px] border-b border-[#d8d8d8] bg-[#f5f5f5]">
        <div className="flex h-[21px] items-center justify-end pr-1">
          <button type="button" aria-label="Close">
            <svg viewBox="0 0 10 10" className="size-2.5" aria-hidden="true"><path d="M1 1l8 8M9 1L1 9" stroke="#000" strokeWidth="2" /></svg>
          </button>
        </div>
        <div className="flex h-[37px] items-center pr-px pl-[11px]">
          <button type="button" className="flex items-center gap-1.5 text-[17px] font-bold text-[#585858]">
            Model
            <WideCaret className="text-[#505050]" />
          </button>
          <button type="button" aria-label="Help" className="mb-1.5 ml-auto flex size-[22px] items-center justify-center rounded-full border border-[#8c8c8c] text-[17px] text-[#777]">?</button>
        </div>
        <div className="flex h-7 items-center gap-2 pl-0.5">
          <button type="button" aria-label="Filter">
            <Sm><path d="M4 12h64v5L44 42v20H28V42L4 17z" fill="#8fb4e0" stroke="#1c2c48" /><path d="M30 20h10v38h-8z" fill="#d8e8f8" /></Sm>
          </button>
          <button type="button" aria-label="Find">
            <Sm><path d="M18 8h12v12h12V8h12v12l14 20v26H46V44H26v22H4V40l14-20z" fill="#000" /><path d="M12 40v18M20 24v10M30 26v10M54 40v18M42 26v10" stroke="#fff8c0" strokeWidth="3" /></Sm>
          </button>
        </div>
      </div>
      <ul className="leading-[26px]">
        <li className="flex h-[26px] items-center gap-1 pl-[15px]">
          <Sm><path d="M2 22L22 4h48v44L52 70H2z" fill="url(#gYellow)" stroke="#8a3c08" strokeWidth="5" /><path d="M4 22L24 6h44L52 22z" fill="#fffbe0" /><path d="M52 22L70 6v42L52 68z" fill="#e0b010" /><path d="M2 22h50v48M52 22L70 4" stroke="#8a3c08" /></Sm>
          Part1
        </li>
        <li className="flex h-[26px] items-center pl-[11px]">
          <Expander />
          <span className="mr-1 ml-[9px] flex"><Sm><path d="M12 16v46M12 36h14M28 62h-8M38 34v22" stroke="#000" strokeWidth="5" /><path d="M38 46h14" stroke="#000" strokeWidth="4" /><path d="M2 2h22v6H2zM28 20h24v6H28zM26 56h20v5H26zM52 36h18v5H52z" fill="#000" /><path d="M2 7h20v9H2zM28 25h22v9H28zM52 41h18v8H52zM26 60h20v9H26z" fill="#5a8cc8" /></Sm></span>
          View: Master
        </li>
        <li className="flex h-[26px] items-center pl-[11px]">
          <Expander />
          <span className="mr-1 ml-[9px] flex"><Sm><path d="M2 8l4-5h24l4 6h36v59H2z" fill="#f5dba8" stroke="#86694a" /><path d="M4 16h26l5-6" stroke="#86694a" strokeWidth="3" /></Sm></span>
          Origin
        </li>
        <li className="flex h-[26px] items-center gap-1 pl-7">
          <Sm><path d="M22 3h26l20 20v26L48 69H22L3 49V23z" fill="url(#gRed)" stroke="#111" strokeWidth="4" /><path d="M20 22l30 30M50 22L20 52" stroke="#fff" strokeWidth="9" /></Sm>
          End of Part
        </li>
      </ul>
    </aside>
  );
}

/* ---------- 3D viewport ---------- */

const fill = { fill: "#ba6e26", fillOpacity: 0.25 };
const handles = [[1059, 373], [1469, 550], [1059, 966], [1469, 1143]];

function Viewport() {
  return (
    <main className="relative min-w-0 flex-1 overflow-hidden bg-[linear-gradient(180deg,#7789a5_0%,#8d9bb5_20%,#9fa7bc_45%,#9ca5b9_65%,#979dad_79%,#a7abb6_85%,#b0b4bd_90%,#babdc5_95%,#c3c4c7_100%)]">
      <div className="absolute inset-0 bg-[linear-gradient(90deg,rgba(28,32,40,0.74)_0%,rgba(32,38,48,0.5)_9%,rgba(40,50,62,0.29)_20%,rgba(50,60,75,0.11)_32%,rgba(50,60,80,0)_44%,rgba(50,60,80,0)_76%,rgba(50,60,75,0.12)_90%,rgba(45,55,70,0.33)_100%)] [mask-image:linear-gradient(180deg,#000_0%,rgba(0,0,0,0.85)_40%,rgba(0,0,0,0.68)_60%,rgba(0,0,0,0.45)_73%,rgba(0,0,0,0.22)_81%,rgba(0,0,0,0.13)_88%,rgba(0,0,0,0.08)_100%)]" />
      <svg viewBox="367 209 1494 964" preserveAspectRatio="xMidYMin slice" className="absolute inset-0 h-full w-full" fill="none" role="img" aria-label="Origin planes">
        <polygon points="1019,537 1507,388 1507,981 1019,1129" {...fill} />
        <polygon points="815,745 1302,596 1712,774 1225,922" {...fill} />
        <polygon points="1058,374 1468,551 1468,1143 1058,967" {...fill} />
        <g stroke="#ffff00" shapeRendering="crispEdges">
          <polyline points="1263,462 1507,388 1507,981 1468,993" />
          <polyline points="1263,462 1019,537 1019,1129 1263,1055" />
          <path d="M1468 993L1263 1055" strokeOpacity="0.75" />
          <polyline points="1058,670 815,745 1225,922 1712,774 1507,685" />
          <polyline points="1058,670 1302,596 1507,685" strokeOpacity="0.65" />
          <path d="M1263 433V759M1263 922V1086" />
          <path d="M1263 759V922" strokeOpacity="0.75" />
          <path d="M1263 759L1488 856M995 841L1263 759M1038 661L1058 670M1507 685L1532 677" />
          <path d="M1058 670L1263 759L1507 685" strokeOpacity="0.8" />
        </g>
        <polygon points="1058,374 1468,551 1468,1143 1058,967" stroke="#ffffff" shapeRendering="crispEdges" />
        {handles.map(([x, y]) => (
          <circle key={x + "-" + y} cx={x} cy={y} r="6" stroke="#ffff00" strokeWidth="2" strokeDasharray="7 1" />
        ))}
        <path d="M440 1172h3M448 1172h3" stroke="#3ed840" strokeWidth="2" />
        <text transform="translate(1062 399) skewY(22)" fontSize="16" fill="#f2f2f2" fontFamily="Open Sans, sans-serif">XY Plane</text>
      </svg>
      <div role="tooltip" className="absolute top-[260px] left-[793px] flex h-[29px] items-center border border-black bg-[#dcdcdc] px-1 pt-px whitespace-nowrap text-black">
        Select plane to create sketch or an existing sketch to edit
      </div>
    </main>
  );
}

export default function App() {
  return (
    <div className="flex h-screen flex-col overflow-hidden bg-[#505050] font-['Open_Sans',sans-serif] text-[17px] leading-6">
      <Defs />
      <TitleBar />
      <TabBar />
      <Ribbon />
      <div className="flex min-h-0 flex-1">
        <Browser />
        <Viewport />
      </div>
    </div>
  );
}
